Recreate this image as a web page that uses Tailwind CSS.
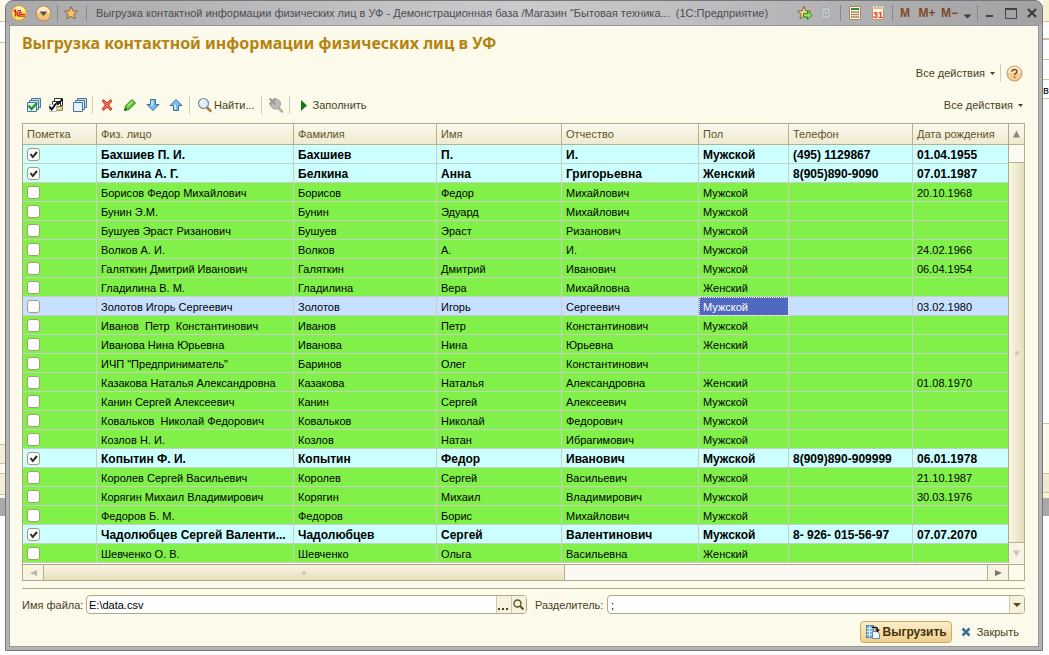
<!DOCTYPE html>
<html lang="ru">
    <head>
        <meta charset="UTF-8">
        <meta name="viewport" content="width=device-width, initial-scale=1">
        <title>Выгрузка контактной информации физических лиц в УФ</title>
        <script src="https://cdn.jsdelivr.net/npm/@tailwindcss/browser@4"></script>
    </head>
    <body class="flex bg-white font-['Liberation_Sans',Arial,sans-serif] text-[11px] leading-[14px] text-[#4a3f1c]">
        <!-- left edge of the parent window -->
        <div class="w-[5px] shrink-0 flex flex-col">
            <div class="h-[21px] bg-[#fbf9e6]"></div>
            <div class="h-[22px] border-y border-[#c9c3a0] bg-white"></div>
            <div class="h-[401px] bg-[#fcfaeb]"></div>
            <div class="h-[20px] border-y border-[#c9c3a0] bg-[#f3efd6]"></div>
            <div class="h-[10px] border-b border-[#c9c3a0] bg-[#fcfaeb]"></div>
            <div class="h-[21px] border-b border-[#c9c3a0] bg-[#f3efd6]"></div>
            <div class="h-[3px] bg-[#fcfaeb]"></div>
            <div class="h-[18px] bg-[#a9a9a9]"></div>
        </div>

        <!-- window -->
        <div class="flex-1 min-w-0 rounded-t-lg border border-[#77777a] bg-[#b4b4b7] px-[3px] pb-[3px]">
            <!-- title bar -->
            <header class="h-[24px] -mx-[3px] rounded-t-lg pl-[5px] pr-[5px] flex items-center bg-linear-to-r from-[#a9a9ac] via-[#cbcbcd] to-[#a2a2a5]">
                <button type="button" aria-label="1С" class="w-[18px]">
                    <svg class="size-[16px]" viewBox="0 0 16 16">
                        <circle cx="8" cy="8" r="7.5" fill="#fde36a" stroke="#d8973a"/>
                        <ellipse cx="8" cy="4.5" rx="5" ry="3" fill="#fff6c0"/>
                        <path d="M2.500 6.500 4.500 5v6.500M10 6.200C8.800 4.700 6 5.200 6 8.200s1.900 3 3.200 3H14M10.300 8c-.4-1.300-2.200-1-2.200.2s.7 1.100 1.700 1.100H14" fill="none" stroke="#d5221a" stroke-width="1.300"/>
                    </svg>
                </button>
                <button type="button" aria-label="Меню" class="ml-[6px] w-[18px]">
                    <svg class="size-[17px]" viewBox="0 0 17 17">
                        <circle cx="8.500" cy="8.500" r="7.500" fill="#f3c078" stroke="#b98442"/>
                        <path d="M2 8a6.500 6.500 0 0 1 13 0z" fill="#fdebc9"/>
                        <path d="M4.500 6.500h8l-4 4.500z" fill="#55504a"/>
                    </svg>
                </button>
                <span class="ml-[4px] w-px h-[16px] bg-[#87878a]"></span>
                <button type="button" aria-label="Избранное" class="ml-[5px] w-[16px]">
                    <svg class="size-[16px]" viewBox="0 0 16 16"><path d="m8 1.500 1.800 4.300 4.700.4-3.500 3 1.100 4.600L8 11.400l-4.100 2.400L5 9.200l-3.500-3 4.700-.4z" fill="#fbbf6c" stroke="#86673f"/></svg>
                </button>
                <span class="ml-[7px] w-px h-[16px] bg-[#87878a]"></span>
                <h2 class="ml-[9px] flex-1 min-w-0 truncate whitespace-pre text-[#4c4c51]">Выгрузка контактной информации физических лиц в УФ - Демонстрационная база /Магазин "Бытовая техника...  (1С:Предприятие)</h2>
                <div class="flex items-center text-[12px] font-bold text-[#7c4a2a]">
                    <button type="button" aria-label="Добавить в избранное" class="w-[18px]">
                        <svg class="size-[17px]" viewBox="0 0 17 17">
                            <path d="m8 1.500 1.800 4.300 4.700.4-3.500 3 1.100 4.600L8 11.400l-4.100 2.400L5 9.200l-3.500-3 4.700-.4z" fill="#f7cf8a" stroke="#86673f"/>
                            <path d="M7.500 8.500h4V6l4.500 4.200-4.500 4.300V12h-4z" fill="#8ce25f" stroke="#2d8a1d"/>
                        </svg>
                    </button>
                    <button type="button" aria-label="Страница" class="ml-[4px] w-[18px]">
                        <svg class="size-[16px]" viewBox="0 0 16 16"><path d="M3.500 2.500h7l2 2v9h-9z" fill="#bfc5ca" stroke="#a4abb1"/><path d="m8 5 .9 2 2.100.2-1.600 1.400.5 2.100L8 9.600l-1.900 1.100.5-2.100L5 7.200 7.100 7z" fill="#ccd0d3" stroke="#9aa1a8"/></svg>
                    </button>
                    <span class="ml-[4px] w-px h-[16px] bg-[#87878a]"></span>
                    <button type="button" aria-label="Калькулятор" class="ml-[6px] w-[16px]">
                        <svg class="size-[16px]" viewBox="0 0 16 16"><path d="M2.500 1.500h11v13h-11z" fill="#fffbe9" stroke="#a9885c"/><path d="M4 3h8v2H4z" fill="#2e8a34"/><path d="M4 7h8M4 9.500h8M4 12h8" stroke="#8a5a2c" stroke-width="1.400" stroke-dasharray="1.500 .67"/></svg>
                    </button>
                    <button type="button" aria-label="Календарь" class="ml-[7px] w-[16px]">
                        <svg class="size-[16px]" viewBox="0 0 16 16"><path d="M2.500 2.500h11v12h-11z" fill="#fff5e6" stroke="#c09565"/><path d="M2 2h12v2H2z" fill="#e0a368"/><path d="M4 1v2.500M7 1v2.500M10 1v2.500M12.500 1v2.500" stroke="#fff"/><text x="8" y="13" font-size="9" font-weight="bold" text-anchor="middle" fill="#e0361c">31</text></svg>
                    </button>
                    <span class="ml-[6px] w-px h-[16px] bg-[#87878a]"></span>
                    <button type="button" class="ml-[5px] w-[14px]">M</button>
                    <button type="button" class="ml-[5px] w-[20px]">M+</button>
                    <button type="button" class="ml-[3px] w-[19px]">M−</button>
                    <button type="button" aria-label="Ещё" class="ml-[4px] w-[10px]">
                        <svg class="w-[9px] h-[5px] mt-[6px]" viewBox="0 0 9 5"><path d="M.5.500h8L4.500 4.500z" fill="#3f3f42"/></svg>
                    </button>
                    <span class="ml-[4px] w-px h-[16px] bg-[#87878a]"></span>
                    <button type="button" aria-label="Свернуть" class="ml-[7px] w-[10px]"><svg class="w-[9px] h-[12px]" viewBox="0 0 9 12"><path d="M1 9h7" stroke="#444447" stroke-width="2"/></svg></button>
                    <button type="button" aria-label="Развернуть" class="ml-[10px] w-[12px]"><svg class="w-[12px] h-[11px]" viewBox="0 0 12 11"><path d="M.5 1.500h11v9H.5z" fill="none" stroke="#444447"/><path d="M0 1h12" stroke="#444447" stroke-width="2"/></svg></button>
                    <button type="button" aria-label="Закрыть окно" class="ml-[10px] w-[10px]"><svg class="size-[10px]" viewBox="0 0 10 10"><path d="m1 1 8 8m0-8L1 9" stroke="#3c3c3f" stroke-width="2.200"/></svg></button>
                </div>
            </header>

            <main class="border border-[#97979a] bg-[#fcfaeb] pl-[12px] pr-[13px] pb-[3px]">
                <h1 class="h-[34px] leading-[34px] truncate font-['Noto_Sans',sans-serif] font-bold text-[16px] text-[#b5830f]">Выгрузка контактной информации физических лиц в УФ</h1>

                <!-- form actions -->
                <div class="h-[26px] flex items-center justify-end pr-[2px]">
                    <button type="button" class="flex items-center gap-[5px]">Все действия
                        <svg class="w-[5px] h-[3px]" viewBox="0 0 5 3"><path d="M0 0h5L2.500 3z" fill="#4a3f1c"/></svg>
                    </button>
                    <span class="ml-[5px] mr-[5px] w-px h-[18px] bg-[#d3cdb0]"></span>
                    <button type="button" aria-label="Справка">
                        <svg class="size-[17px]" viewBox="0 0 17 17">
                            <circle cx="8.500" cy="8.500" r="7.500" fill="#f7cd92" stroke="#c4935a"/>
                            <path d="M2 8a6.500 6.500 0 0 1 13 0z" fill="#fde7c8"/>
                            <path d="M6 6.700C6 3.600 11 3.700 11 6.500c0 1.800-2.400 1.800-2.400 3.500M8.600 11.500v1.500" fill="none" stroke="#8a4a20" stroke-width="1.500"/>
                        </svg>
                    </button>
                </div>

                <!-- list toolbar -->
                <div class="mt-[6px] mb-[5px] h-[26px] flex items-center">
                    <button type="button" aria-label="Пометить все" class="w-[23px] flex justify-center">
                        <svg class="size-[16px]" viewBox="0 0 16 16"><g stroke="#47759c"><path d="M5.500 1.500h9v9h-9z" fill="#c6def0"/><path d="M3.500 3.500h9v9h-9z" fill="#d6e8f5"/><path d="M1.500 5.500h9v9h-9z" fill="#eef6fc"/></g><path d="m2.500 8.500 3 3.500 5.500-6" fill="none" stroke="#1d9a1d" stroke-width="2.400"/></svg>
                    </button>
                    <button type="button" aria-label="Инвертировать" class="w-[22px] flex justify-center">
                        <svg class="size-[16px]" viewBox="0 0 16 16"><path d="M6.500 1.500h8v7h-8z" fill="#fff" stroke="#333"/><path d="M4.500 4.500h8v7h-8z" fill="#fff" stroke="#333"/><path d="M8.500 9.500h6v4h-6z" fill="#d8d49a" stroke="#8c894e"/><path d="M1.500 7.500h7v7h-7z" fill="#fff" stroke="#bbb"/><path d="m1.500 9.500 2.200 3L8 6.500M8.500 5l1.500 2 4.500-5" fill="none" stroke="#000" stroke-width="1.800"/></svg>
                    </button>
                    <button type="button" aria-label="Снять пометки" class="w-[25px] flex justify-center">
                        <svg class="size-[16px]" viewBox="0 0 16 16"><g stroke="#47759c"><path d="M5.500 1.500h9v9h-9z" fill="#c6def0"/><path d="M3.500 3.500h9v9h-9z" fill="#d6e8f5"/><path d="M1.500 5.500h9v9h-9z" fill="#e6f1fa"/></g></svg>
                    </button>
                    <span class="w-px h-[18px] bg-[#d3cdb0]"></span>
                    <button type="button" aria-label="Удалить" class="ml-[2px] w-[23px] flex justify-center">
                        <svg class="size-[14px]" viewBox="0 0 14 14"><path d="m2 3 1.500-1.500L7 5l3.500-3.500L12 3 8.700 7l3.300 4-1.500 1.500L7 9l-3.500 3.500L2 11l3.300-4z" fill="#ee6a55" stroke="#c93a2c"/></svg>
                    </button>
                    <button type="button" aria-label="Изменить" class="w-[23px] flex justify-center">
                        <svg class="size-[14px]" viewBox="0 0 14 14"><path d="m1.500 12.500 1-4.500L9 1.500 12.500 5 6 11.500z" fill="#5fc52e" stroke="#2c7d17"/><path d="m4.500 8.500 5-5" stroke="#b6ee8c" stroke-width="1.400"/><path d="m1.500 12.500.600-2.500 2 2z" fill="#2b4a1c"/></svg>
                    </button>
                    <button type="button" aria-label="Вниз" class="w-[23px] flex justify-center">
                        <svg class="size-[14px]" viewBox="0 0 14 14"><path d="M4.500 1.500h5v5h3.500L7 12.500 1 6.500h3.500z" fill="#79bdf0" stroke="#356f9e"/><path d="M6 2.500v5" stroke="#c9e8fc" stroke-width="2"/></svg>
                    </button>
                    <button type="button" aria-label="Вверх" class="w-[23px] flex justify-center">
                        <svg class="size-[14px]" viewBox="0 0 14 14"><path d="M4.500 12.500h5v-5h3.500L7 1.500 1 7.500h3.500z" fill="#79bdf0" stroke="#356f9e"/><path d="M6 6.500v5" stroke="#c9e8fc" stroke-width="2"/></svg>
                    </button>
                    <span class="ml-[2px] w-px h-[18px] bg-[#d3cdb0]"></span>
                    <button type="button" class="ml-[7px] flex items-center">
                        <svg class="size-[16px] mr-px" viewBox="0 0 16 16"><path d="m9.500 10 4 4" stroke="#b57a3c" stroke-width="2.600" stroke-linecap="round"/><circle cx="6.500" cy="6.500" r="5" fill="#dceefa" stroke="#7f8c99" stroke-width="1.200"/><path d="M3.500 6a3 3 0 0 1 3-2.500" fill="none" stroke="#fff" stroke-width="1.500"/></svg>
                        Найти...
                    </button>
                    <span class="ml-[6px] w-px h-[18px] bg-[#d3cdb0]"></span>
                    <button type="button" aria-label="Отменить поиск" class="ml-[6px]">
                        <svg class="size-[16px]" viewBox="0 0 16 16"><path d="m10.500 11 3.500 3.500" stroke="#b3b0a8" stroke-width="2.600" stroke-linecap="round"/><circle cx="7.500" cy="7" r="5" fill="#bdbbb4" stroke="#9f9d98"/><path d="m1.500 1.500 6 6m0-6-6 6" stroke="#96949a" stroke-width="1.800"/></svg>
                    </button>
                    <span class="ml-[5px] w-px h-[18px] bg-[#d3cdb0]"></span>
                    <button type="button" class="ml-[11px] flex items-center gap-[6px]">
                        <svg class="w-[6px] h-[11px]" viewBox="0 0 6 11"><path d="M0 0v11l6-5.500z" fill="#0b7d10"/></svg>
                        Заполнить
                    </button>
                    <button type="button" class="ml-auto mr-[2px] flex items-center gap-[5px]">Все действия
                        <svg class="w-[5px] h-[3px]" viewBox="0 0 5 3"><path d="M0 0h5L2.500 3z" fill="#4a3f1c"/></svg>
                    </button>
                </div>

                <!-- list -->
                <div class="border border-[#b0a985]">
                    <div class="flex">
                        <table class="flex-1 min-w-0 table-fixed w-full border-separate border-spacing-0 text-black">
                            <colgroup>
                                <col class="w-[74px]">
                                <col>
                                <col class="w-[143px]">
                                <col class="w-[125px]">
                                <col class="w-[137px]">
                                <col class="w-[90px]">
                                <col class="w-[124px]">
                                <col class="w-[95px]">
                            </colgroup>
                            <thead>
                                <tr class="h-[21px] text-left text-[#5f5228] bg-linear-to-b from-[#fbf9ef] to-[#efe9cd] *:border-b *:border-r *:last:border-r-0 *:border-[#b8b08a] *:font-normal *:px-[4px] *:py-0 *:truncate">
                                    <th>Пометка</th>
                                    <th>Физ. лицо</th>
                                    <th>Фамилия</th>
                                    <th>Имя</th>
                                    <th>Отчество</th>
                                    <th>Пол</th>
                                    <th>Телефон</th>
                                    <th>Дата рождения</th>
                                </tr>
                            </thead>
                            <tbody id="persons"></tbody>
                        </table>
                        <!-- vertical scrollbar -->
                        <div class="w-[16px] shrink-0 border-l border-[#b0a985] flex flex-col bg-[#faf9f4]">
                            <button type="button" aria-label="Прокрутить вверх" class="h-[21px] border-b border-[#b8b08a] bg-linear-to-b from-[#fbf9ef] to-[#efe9cd] flex items-center justify-center">
                                <svg class="w-[7px] h-[8px]" viewBox="0 0 8 8"><path d="M4 0 8 8H0z" fill="#8a8882"/></svg>
                            </button>
                            <div class="mt-[17px] flex-1 border-y border-[#b8b08a] bg-linear-to-r from-[#f8f5e4] to-[#e6dfbc] flex items-center justify-center">
                                <span class="size-[4px] rounded-full bg-[#cfc8a8]"></span>
                            </div>
                            <button type="button" aria-label="Прокрутить вниз" class="h-[20px] bg-[#f7f4e2] flex items-center justify-center">
                                <svg class="w-[7px] h-[7px]" viewBox="0 0 8 7"><path d="M0 0h8L4 7z" fill="#c9c6b8"/></svg>
                            </button>
                        </div>
                    </div>
                    <!-- horizontal scrollbar -->
                    <div class="mt-px h-[16px] border-t border-[#b0a985] flex bg-[#faf9f4]">
                        <button type="button" aria-label="Прокрутить влево" class="w-[21px] border-r border-[#b8b08a] bg-[#f7f4e2] flex items-center justify-center">
                            <svg class="w-[7px] h-[6px]" viewBox="0 0 7 6"><path d="M7 0v6L0 3z" fill="#b9b6a8"/></svg>
                        </button>
                        <div class="flex-1 flex">
                            <div class="w-[55.2%] border-r border-[#b8b08a] bg-linear-to-b from-[#f8f5e4] to-[#e6dfbc] flex items-center justify-center">
                                <span class="size-[4px] rounded-full bg-[#cfc8a8]"></span>
                            </div>
                        </div>
                        <button type="button" aria-label="Прокрутить вправо" class="w-[21px] border-l border-[#b8b08a] bg-[#f7f4e2] flex items-center justify-center">
                            <svg class="w-[7px] h-[6px]" viewBox="0 0 7 6"><path d="M0 0v6l7-3z" fill="#77756e"/></svg>
                        </button>
                        <span class="w-[16px] border-l border-[#b8b08a] bg-[#fcfaeb]"></span>
                    </div>
                </div>

                <!-- export settings -->
                <form class="mt-[7px] border-t border-[#b0a985] pt-[6px]">
                    <div class="h-[19px] grid grid-cols-[64px_1.055fr_80px_1fr] items-center">
                        <label for="file_name">Имя файла:</label>
                        <div class="h-[19px] flex rounded border border-[#b0a985] bg-white overflow-hidden">
                            <input type="text" id="file_name" value="E:\data.csv" class="flex-1 min-w-0 px-[2px] text-black outline-none">
                            <button type="button" aria-label="Выбрать" class="w-[15px] border-l border-[#cfc9a9] bg-[#f6f2dd] flex items-center justify-center">
                                <svg class="w-[11px] h-[10px]" viewBox="0 0 11 10"><path d="M0 8h2v2H0zM4 8h2v2H4zM8 8h2v2H8z" fill="#4a3f1c"/></svg>
                            </button>
                            <button type="button" aria-label="Открыть" class="w-[15px] border-l border-[#cfc9a9] bg-[#f6f2dd] flex items-center justify-center">
                                <svg class="size-[11px]" viewBox="0 0 11 11"><circle cx="4.500" cy="4.500" r="3.500" fill="none" stroke="#5f5320" stroke-width="1.400"/><path d="m7 7 3.500 3.500" stroke="#5f5320" stroke-width="2"/></svg>
                            </button>
                        </div>
                        <label for="delimiter" class="pl-[8px]">Разделитель:</label>
                        <div class="relative h-[19px] rounded border border-[#b0a985] bg-white overflow-hidden">
                            <select id="delimiter" class="block appearance-none w-full h-[17px] px-[3px] text-black outline-none">
                                <option>;</option>
                                <option>,</option>
                            </select>
                            <span class="absolute right-0 inset-y-0 w-[15px] border-l border-[#cfc9a9] bg-[#f6f2dd] flex items-center justify-center pointer-events-none">
                                <svg class="w-[8px] h-[4px]" viewBox="0 0 8 4"><path d="M0 0h8L4 4z" fill="#5a4a08"/></svg>
                            </span>
                        </div>
                    </div>
                    <div class="mt-[7px] flex items-center justify-end pr-[6px]">
                        <button type="submit" class="h-[22px] w-[92px] rounded border border-[#c9a865] bg-linear-to-b from-[#fbeecb] to-[#efcf8b] flex items-center justify-center gap-[2px] font-bold text-[12px] text-[#3f3208]">
                            <svg class="size-[16px]" viewBox="0 0 16 16"><path d="M1.500 1.500h7v12h-7z" fill="#7fb2d8" stroke="#3f7fae"/><path d="M1.500 4.500h7M1.500 7.500h7M1.500 10.500h7M4.500 1.500v12" stroke="#d6e9f6"/><path d="M7.500 7.500h5l2 2v5h-7z" fill="#f3f8fc" stroke="#5b88ad"/><path d="M7 3.500h3.500a2 2 0 0 1 2 2V7" fill="none" stroke="#111" stroke-width="1.400"/><path d="M10 5.500h5l-2.500 3z" fill="#111"/></svg>
                            Выгрузить
                        </button>
                        <button type="button" class="ml-[9px] flex items-center gap-[6px]">
                            <svg class="size-[10px]" viewBox="0 0 10 10"><path d="m1.500 1.500 7 7m0-7-7 7" stroke="#3d7099" stroke-width="2.600"/></svg>
                            Закрыть
                        </button>
                    </div>
                </form>
            </main>
        </div>

        <!-- right edge of the parent window -->
        <div class="w-[6px] shrink-0 flex flex-col overflow-hidden text-black">
            <div class="h-[21px] bg-[#f8f3cf]"></div>
            <div class="h-[18px] border-y border-[#c9c3a0] bg-white"></div>
            <div class="h-[21px] border-y border-[#c9c3a0] bg-white"></div>
            <div class="h-[20px] border-b border-[#c9c3a0] bg-white"></div>
            <div class="h-[19px] border-b border-[#c9c3a0] bg-white pt-[3px]">ва</div>
            <div class="h-[325px] border-b border-[#c9c3a0] bg-white"></div>
            <div class="h-[49px] bg-[#fcfaeb]"></div>
            <div class="h-[20px] border-y border-[#c9c3a0] bg-[#efe9cd]"></div>
            <div class="h-[5px] bg-[#f8f3cf]"></div>
            <div class="h-[18px] bg-[#a9a9a9]"></div>
        </div>

        <script>
            // checked, full name, surname, first name, patronymic, sex, phone, birth date
            const persons = [
                [1, 'Бахшиев П. И.', 'Бахшиев', 'П.', 'И.', 'Мужской', '(495) 1129867', '01.04.1955'],
                [1, 'Белкина А. Г.', 'Белкина', 'Анна', 'Григорьевна', 'Женский', '8(905)890-9090', '07.01.1987'],
                [0, 'Борисов Федор Михайлович', 'Борисов', 'Федор', 'Михайлович', 'Мужской', '', '20.10.1968'],
                [0, 'Бунин Э.М.', 'Бунин', 'Эдуард', 'Михайлович', 'Мужской', '', ''],
                [0, 'Бушуев Эраст Ризанович', 'Бушуев', 'Эраст', 'Ризанович', 'Мужской', '', ''],
                [0, 'Волков А. И.', 'Волков', 'А.', 'И.', 'Мужской', '', '24.02.1966'],
                [0, 'Галяткин Дмитрий Иванович', 'Галяткин', 'Дмитрий', 'Иванович', 'Мужской', '', '06.04.1954'],
                [0, 'Гладилина В. М.', 'Гладилина', 'Вера', 'Михайловна', 'Женский', '', ''],
                [0, 'Золотов Игорь Сергеевич', 'Золотов', 'Игорь', 'Сергеевич', 'Мужской', '', '03.02.1980'],
                [0, 'Иванов  Петр  Константинович', 'Иванов', 'Петр', 'Константинович', 'Мужской', '', ''],
                [0, 'Иванова Нина Юрьевна', 'Иванова', 'Нина', 'Юрьевна', 'Женский', '', ''],
                [0, 'ИЧП "Предприниматель"', 'Баринов', 'Олег', 'Константинович', '', '', ''],
                [0, 'Казакова Наталья Александровна', 'Казакова', 'Наталья', 'Александровна', 'Женский', '', '01.08.1970'],
                [0, 'Канин Сергей Алексеевич', 'Канин', 'Сергей', 'Алексеевич', 'Мужской', '', ''],
                [0, 'Ковальков  Николай Федорович', 'Ковальков', 'Николай', 'Федорович', 'Мужской', '', ''],
                [0, 'Козлов Н. И.', 'Козлов', 'Натан', 'Ибрагимович', 'Мужской', '', ''],
                [1, 'Копытин Ф. И.', 'Копытин', 'Федор', 'Иванович', 'Мужской', '8(909)890-909999', '06.01.1978'],
                [0, 'Королев Сергей Васильевич', 'Королев', 'Сергей', 'Васильевич', 'Мужской', '', '21.10.1987'],
                [0, 'Корягин Михаил Владимирович', 'Корягин', 'Михаил', 'Владимирович', 'Мужской', '', '30.03.1976'],
                [0, 'Федоров Б. М.', 'Федоров', 'Борис', 'Михайлович', 'Мужской', '', ''],
                [1, 'Чадолюбцев Сергей Валенти...', 'Чадолюбцев', 'Сергей', 'Валентинович', 'Мужской', '8- 926- 015-56-97', '07.07.2070'],
                [0, 'Шевченко О. В.', 'Шевченко', 'Ольга', 'Васильевна', 'Женский', '', ''],
            ];
            const current = 8;

            document.getElementById('persons').innerHTML = persons.map(([checked, ...cells], i) => {
                let rowClass = 'bg-[#81f048]';
                if (checked) rowClass = 'bg-[#ccffff] font-bold text-[12px]';
                if (i === current) rowClass = 'bg-[#c8e0ff]';
                const tds = cells.map((text, n) => {
                    const active = i === current && n === 4;
                    return `<td class="h-[19px] px-[4px] pt-[2px] pb-0 truncate whitespace-pre border-b border-r last:border-r-0 border-[#c6cfc0] ${active ? 'bg-[#4f69c0] text-white outline-1 outline-dotted outline-white -outline-offset-1' : ''}">${text}</td>`;
                }).join('');
                return `<tr class="${rowClass}">
                    <td class="h-[19px] px-[4px] py-0 border-b border-r border-[#c6cfc0]">
                        <label class="relative block size-[13px]">
                            <input type="checkbox" aria-label='${cells[0]}' class="peer block appearance-none size-[13px] rounded-[3px] border border-[#a39c74] bg-white" ${checked ? 'checked' : ''}>
                            <svg class="absolute inset-0 size-[13px] hidden peer-checked:block pointer-events-none" viewBox="0 0 13 13"><path d="m3.500 6 2.300 3L10 4" fill="none" stroke="#2e2e2e" stroke-width="2"/></svg>
                        </label>
                    </td>${tds}
                </tr>`;
            }).join('');
        </script>
    </body>
</html>
